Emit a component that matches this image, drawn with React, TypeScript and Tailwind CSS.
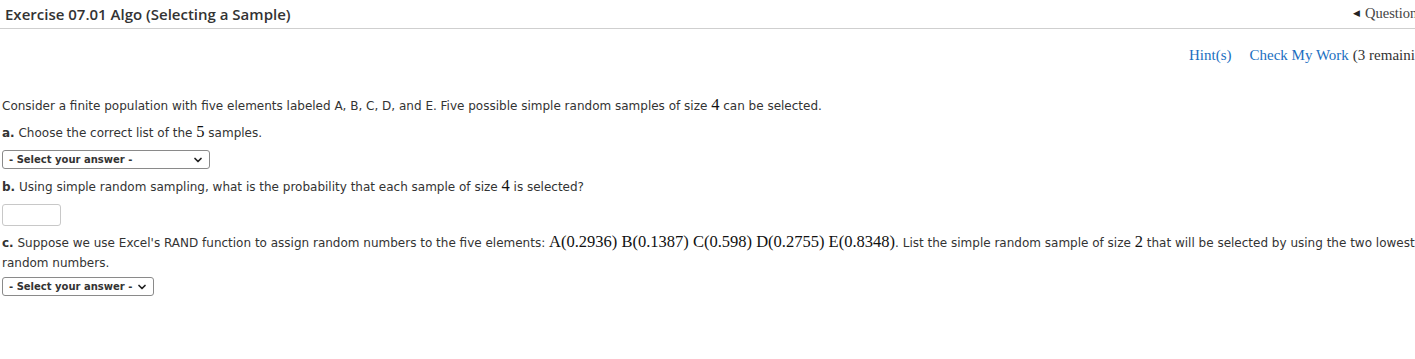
import { ChevronDown } from "lucide-react";

const body = "font-['DejaVu_Sans',Verdana,sans-serif] text-[12px] text-[#333]";
const math = "font-['Liberation_Serif','Times_New_Roman',serif] text-[16.5px] leading-[16px] text-[#111]";

function M({ children }: { children: React.ReactNode }) {
  return <span className={math}>{children}</span>;
}

function Select({ width }: { width: string }) {
  return (
    <div
      className={`flex h-[19px] ${width} items-center justify-between whitespace-nowrap rounded-[3px] border border-[#8a8a8a] bg-white pl-[6px] pr-[5px] font-['DejaVu_Sans',Verdana,sans-serif] text-[10px] font-bold text-[#333]`}
    >
      <span>- Select your answer -</span>
      <ChevronDown size={12} strokeWidth={3.5} className="shrink-0 text-[#222]" />
    </div>
  );
}

export default function App() {
  return (
    <div className="h-[359px] w-[1415px] overflow-hidden bg-white">
      <div className="flex h-[29px] items-center justify-between border-b border-[#cfcfcf]">
        <h1 className="pl-[5px] font-['Open_Sans',sans-serif] text-[15px] font-semibold text-[#333]">
          Exercise 07.01 Algo (Selecting a Sample)
        </h1>
        <div className="flex w-[62px] items-center gap-[5px] whitespace-nowrap font-['Liberation_Serif',serif] text-[14.5px] text-[#444]">
          <span className="text-[9px] text-[#222]">◀</span>
          <span>Question</span>
        </div>
      </div>

      <div className="flex h-[51px] items-center whitespace-nowrap pl-[1189px] pt-[1px] font-['Liberation_Serif',serif] text-[15px]">
        <span className="text-[#1a6fc1]">Hint(s)</span>
        <span className="ml-[18px] text-[#1a6fc1]">Check My Work</span>
        <span className="ml-[4px] text-[#333]">(3 remaining)</span>
      </div>

      <div className={`${body} pl-[2px]`}>
        <p className="mt-[16px] leading-[20px]">
          Consider a finite population with five elements labeled A, B, C, D, and E. Five possible simple
          random samples of size <M>4</M> can be selected.
        </p>
        <p className="mt-[7px] leading-[20px]">
          <b>a.</b> Choose the correct list of the <M>5</M> samples.
        </p>
        <div className="mt-[7px]">
          <Select width="w-[208px]" />
        </div>
        <p className="mt-[8px] leading-[20px]">
          <b>b.</b> Using simple random sampling, what is the probability that each sample of size <M>4</M>{" "}
          is selected?
        </p>
        <div className="mt-[7px] h-[22px] w-[59px] rounded-[3px] border border-[#c8c8c8] bg-white" />
        <p className="mt-[7px] whitespace-nowrap leading-[20px]">
          <b>c.</b> Suppose we use Excel's RAND function to assign random numbers to the five elements:{" "}
          <M>A(0.2936) B(0.1387) C(0.598) D(0.2755) E(0.8348)</M>. List the simple random sample of size{" "}
          <M>2</M> that will be selected by using the two lowest
          <br />
          random numbers.
        </p>
        <div className="mt-[4px]">
          <Select width="w-[152px]" />
        </div>
      </div>
    </div>
  );
}
